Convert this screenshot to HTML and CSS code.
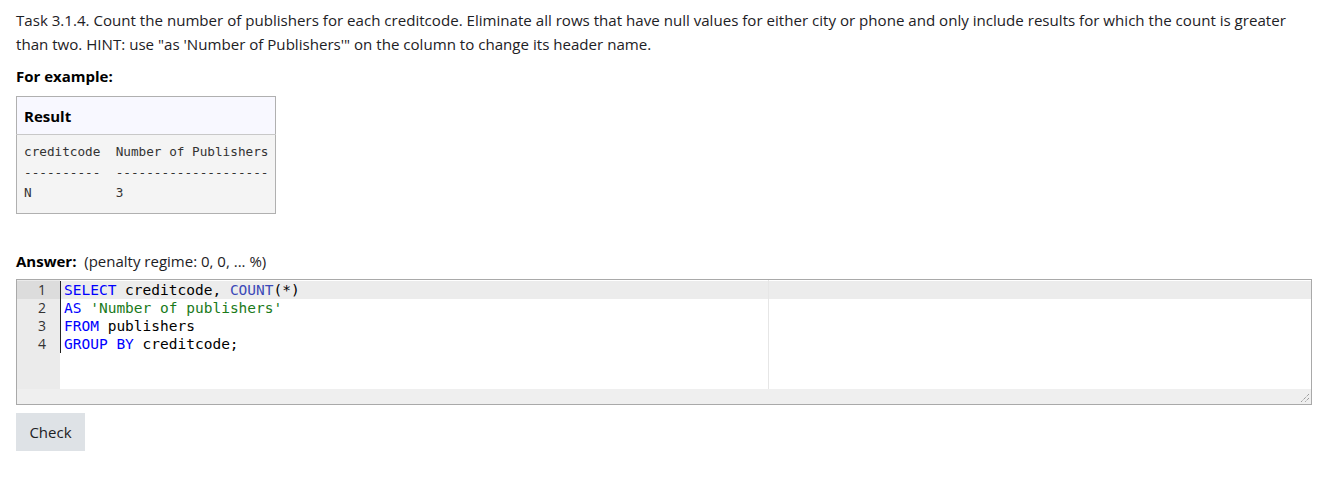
FILE: index.html
```html
<!DOCTYPE html>
<html>
<head>
<meta charset="utf-8">
<link rel="stylesheet" href="styles.css">
</head>
<body>
<div class="page">
  <p class="task">Task 3.1.4. Count the number of publishers for each creditcode. Eliminate all rows that have null values for either city or phone and only include results for which the count is greater than two. HINT: use "as 'Number of Publishers'" on the column to change its header name.</p>
  <p class="example-label">For example:</p>
  <table class="result">
    <thead><tr><th>Result</th></tr></thead>
    <tbody><tr><td><pre>creditcode  Number of Publishers
----------  --------------------
N           3</pre></td></tr></tbody>
  </table>
  <div class="answer-label"><b>Answer:</b>&nbsp;&nbsp;(penalty regime: 0, 0, ... %)</div>
  <div class="editor">
    <div class="editor-main">
      <div class="gutter">
        <div class="gl active">1</div>
        <div class="gl">2</div>
        <div class="gl">3</div>
        <div class="gl">4</div>
      </div>
      <div class="code">
        <div class="margin-line"></div>
        <div class="cl active"><span class="kw">SELECT</span> creditcode, <span class="fn">COUNT</span>(*)</div>
        <div class="cl"><span class="kw">AS</span> <span class="str">'Number of publishers'</span></div>
        <div class="cl"><span class="kw">FROM</span> publishers</div>
        <div class="cl"><span class="kw">GROUP BY</span> creditcode;</div>
      </div>
    </div>
    <div class="editor-foot">
      <svg class="grip" width="12" height="12" viewBox="0 0 12 12"><path d="M11 3 L3 11 M11 7 L7 11" stroke="#777" stroke-width="1" stroke-dasharray="1 1" fill="none"/></svg>
    </div>
  </div>
  <button class="check">Check</button>
</div>
</body>
</html>
```
FILE: styles.css
```css
* { box-sizing: border-box; }
body {
  margin: 0;
  background: #fff;
  font-family: "Open Sans", "Noto Sans", sans-serif;
  font-size: 15.1px;
  color: #1d2125;
}
.page { padding: 8px 16px 0 16px; }
.task {
  margin: 0;
  line-height: 24px;
  width: 1292px;
}
.example-label {
  margin: 8px 0 0 0;
  font-weight: 700;
  line-height: 24px;
  font-size: 15px;
  color: #000;
}
.result {
  margin-top: 8px;
  border-collapse: collapse;
  border: 1px solid #b0b0b0;
}
.result th {
  text-align: left;
  background: #f8f8ff;
  font-weight: 700;
  font-size: 15px;
  padding: 8px 7px 8px 7px;
  height: 38px;
  border-bottom: 1px solid #c8c8c8;
  color: #000;
}
.result td {
  background: #f4f4f4;
  padding: 7px 7px 9px 7px;
}
.result pre {
  margin: 0;
  font-family: "DejaVu Sans Mono", monospace;
  font-size: 12.7px;
  line-height: 20.5px;
  color: #333;
}
.answer-label {
  margin-top: 35px;
  line-height: 24px;
  font-size: 15px;
}
.answer-label b { color: #000; }
.editor {
  margin-top: 6px;
  width: 1296px;
  border: 1px solid #a9a9a9;
  background: #fff;
}
.editor-main {
  display: flex;
  height: 109px;
}
.gutter {
  width: 43px;
  background: #ebebeb;
  padding-top: 1px;
}
.gl {
  height: 18px;
  line-height: 18px;
  text-align: right;
  padding-right: 14px;
  font-family: "Open Sans", sans-serif;
  font-size: 14px;
  color: #333;
}
.gl.active { background: #dcdcdc; }
.code {
  flex: 1;
  position: relative;
  padding-top: 1px;
  font-family: "DejaVu Sans Mono", monospace;
  font-size: 14.5px;
  color: #000;
}
.margin-line {
  position: absolute;
  left: 708px;
  top: 0;
  bottom: 0;
  width: 1px;
  background: #e6e6e6;
}
.cl {
  height: 18px;
  line-height: 18px;
  padding-left: 3px;
  white-space: pre;
  border-left: 1px solid #222;
}
.cl.active { background: #ececec; }
.kw { color: #0000ff; }
.fn { color: #3c4ab8; }
.str { color: #1a7a1a; }
.editor-foot {
  height: 15px;
  background: #efefef;
  display: flex;
  justify-content: flex-end;
  align-items: flex-end;
}
.grip { display: block; margin: 0 1px 1px 0; }
.check {
  margin-top: 8px;
  display: block;
  border: 0;
  background: #dee2e6;
  color: #1d2125;
  font-family: "Open Sans", "Noto Sans", sans-serif;
  font-size: 15px;
  padding: 0;
  height: 38px;
  width: 69px;
}
```
